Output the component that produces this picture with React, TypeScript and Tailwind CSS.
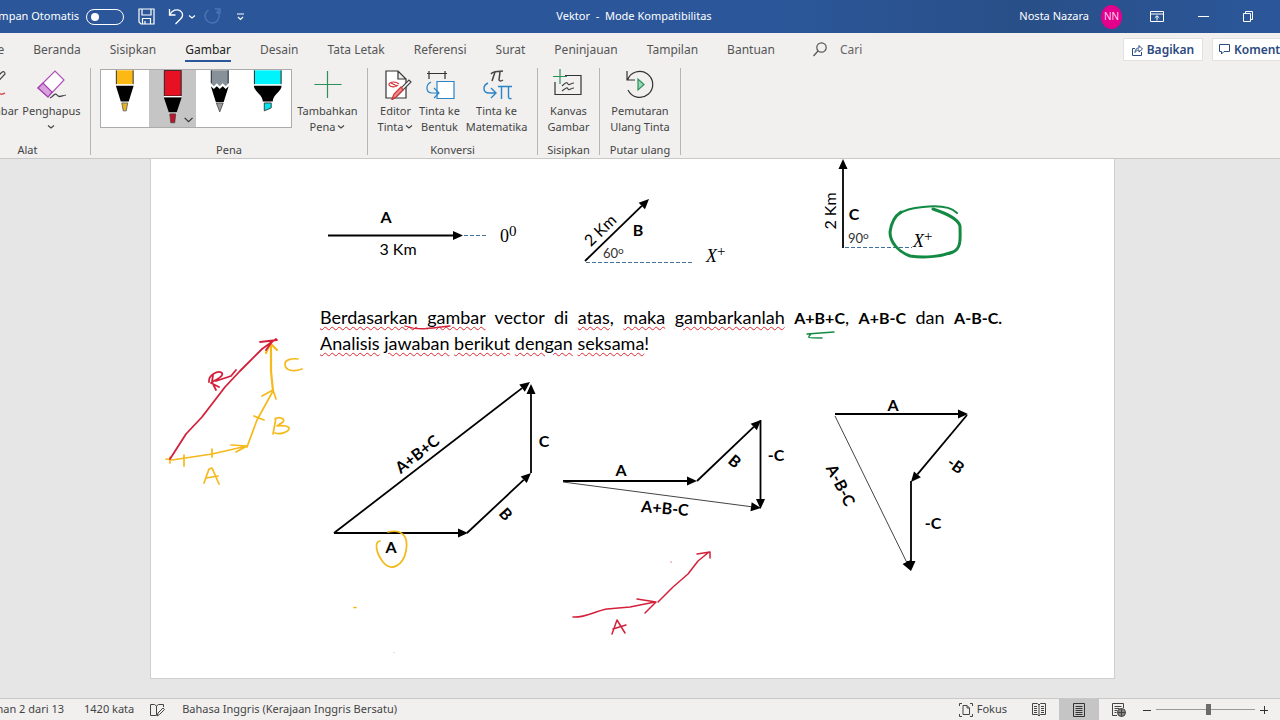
import React from 'react';

const INK_RED = '#d3203b';
const INK_GOLD = '#f6b91c';
const INK_GREEN = '#138a43';

const tabs = ['File', 'Beranda', 'Sisipkan', 'Gambar', 'Desain', 'Tata Letak', 'Referensi', 'Surat', 'Peninjauan', 'Tampilan', 'Bantuan'];

function Chevron({ className = '' }: { className?: string }) {
  return (
    <svg viewBox="0 0 8 6" className={`inline-block h-[6px] w-2 ${className}`} fill="none" stroke="currentColor" strokeWidth="1.1">
      <path d="M1 1.5 4 4l3-2.5" />
    </svg>
  );
}

/* ---------- Title bar ---------- */

function TitleBar() {
  return (
    <header className="grid h-[33px] grid-cols-[1fr_auto_1fr] items-center bg-linear-to-r from-[#2b579a] from-60% via-[#294f88] via-80% to-[#2b579a] pr-[12px] text-[11px] text-white">
      <div className="flex items-center">
        <div className="flex w-[79px] justify-end overflow-hidden whitespace-nowrap">
          <label htmlFor="autosave">Simpan Otomatis</label>
        </div>
        <input
          id="autosave"
          type="checkbox"
          className="ml-[7px] h-4 w-[38px] appearance-none rounded-full border border-white before:ml-1 before:mt-[3px] before:block before:h-2 before:w-2 before:rounded-full before:bg-white before:content-['']"
        />
        <button aria-label="Simpan" className="ml-[14px]">
          <svg viewBox="0 0 17 17" className="h-[17px] w-[17px]" fill="none" stroke="white" strokeWidth="1.2">
            <path d="M1 1h15v15H3l-2-2zM4 1v6h9V1M4.500 16v-5.500h8V16M7 16v-3" />
          </svg>
        </button>
        <button aria-label="Urungkan" className="ml-[13px] flex items-center gap-1">
          <svg viewBox="0 0 16 17" className="h-[17px] w-4" fill="none" stroke="white" strokeWidth="1.3">
            <path d="M1.500 1v6h6M1.500 7C4 2 9 .5 12.500 3c3.500 3 2 6 0 8l-5 5" />
          </svg>
          <Chevron />
        </button>
        <button aria-label="Ulangi" className="ml-2">
          <svg viewBox="0 0 17 17" className="h-[17px] w-[17px]" fill="none" stroke="#4a75b3" strokeWidth="1.4">
            <path d="M11 1h5v5M15 2.500 12 5M4.500 2a7 7 0 1 0 9 1.500" />
          </svg>
        </button>
        <button aria-label="Kustomisasi" className="ml-[15px]">
          <svg viewBox="0 0 9 8" className="h-2 w-[9px]" fill="none" stroke="white" strokeWidth="1.2">
            <path d="M1 1h7M2 4l2.500 2.500L7 4" />
          </svg>
        </button>
      </div>
      <div className="whitespace-pre">Vektor  -  Mode Kompatibilitas</div>
      <div className="flex items-center justify-end pr-[15px]">
        <span>Nosta Nazara</span>
        <span className="ml-3 flex h-6 w-[21px] items-center justify-center rounded-[50%] bg-[#e3008c] text-[10px] text-[#ffd3ee]">NN</span>
        <button aria-label="Opsi pita" className="ml-7">
          <svg viewBox="0 0 14 11" className="h-[11px] w-[14px]" fill="none" stroke="white">
            <path d="M.5.5h13v10H.5zM.5 3h13M7 9.500V5M4.800 6.800 7 4.700l2.200 2.100" />
          </svg>
        </button>
        <button aria-label="Minimalkan" className="ml-[34px]">
          <svg viewBox="0 0 11 11" className="h-[11px] w-[11px]" stroke="white">
            <path d="M0 5.500h11" />
          </svg>
        </button>
        <button aria-label="Pulihkan" className="ml-[34px]">
          <svg viewBox="0 0 10 11" className="h-[11px] w-[10px]" fill="none" stroke="white">
            <path d="M.5 2.500h7v8h-7zM2.500 2.500v-2h7v8h-2" />
          </svg>
        </button>
      </div>
    </header>
  );
}

/* ---------- Ribbon ---------- */

function TabRow() {
  return (
    <nav className="flex h-[33px] items-center text-xs text-[#555]">
      <div className="-ml-[15px] flex gap-[29px]">
        {tabs.map((tab) => (
          <button
            key={tab}
            className={
              tab === 'Gambar'
                ? 'border-b-2 border-[#2b579a] pt-[2px] leading-[20px] text-[#222]'
                : 'border-b-2 border-transparent pt-[2px] leading-[20px]'
            }
          >
            {tab}
          </button>
        ))}
      </div>
      <label htmlFor="search" className="ml-[38px]">
        <svg viewBox="0 0 14 15" className="h-[15px] w-[14px]" fill="none" stroke="#555" strokeWidth="1.200">
          <circle cx="8.500" cy="5.500" r="4.700" />
          <path d="M5 9 .5 14" />
        </svg>
      </label>
      <input id="search" placeholder="Cari" className="ml-[13px] w-32 bg-transparent outline-none placeholder:text-[#666]" />
      <div className="-mr-[17px] ml-auto flex gap-[9px] font-semibold text-[#2b4a80]">
        <button className="flex h-[23px] w-20 items-center justify-center gap-1 border border-[#e1e1e1] bg-white">
          <svg viewBox="0 0 11 12" className="h-3 w-[11px]" fill="none" stroke="currentColor">
            <path d="M3 4.500H.5v7h9V8M3 8.500c0-3 1.500-4.500 4-4.500V1.500L10.500 5 7 8V6C5 6 4 7 3 8.500z" />
          </svg>
          Bagikan
        </button>
        <button className="flex h-[23px] w-[85px] items-center gap-1 border border-[#e1e1e1] bg-white pl-[6px]">
          <svg viewBox="0 0 11 11" className="h-[11px] w-[11px] shrink-0" fill="none" stroke="currentColor">
            <path d="M.5.500h10v7H5L2.500 10V7.500h-2z" />
          </svg>
          Komentar
        </button>
      </div>
    </nav>
  );
}

function Group({ label, className, children }: { label: string; className: string; children: React.ReactNode }) {
  return (
    <section className={`flex h-[87px] shrink-0 flex-col justify-between border-r border-[#b5b5b5] ${className}`}>
      <div className="flex justify-center">{children}</div>
      <div className="text-center leading-[10px]">{label}</div>
    </section>
  );
}

function Tool({ icon, lines, menu, className = '' }: { icon: React.ReactNode; lines: string[]; menu?: boolean; className?: string }) {
  return (
    <button className={`flex flex-col items-center whitespace-nowrap leading-[16px] ${className}`}>
      <svg viewBox="0 0 32 32" className="mb-[3px] h-8 w-8" fill="none" strokeWidth="1.200">
        {icon}
      </svg>
      {lines.map((line, i) => (
        <span key={i} className="flex h-4 items-center gap-[2px]">
          {line}
          {menu && i === lines.length - 1 && <Chevron />}
        </span>
      ))}
    </button>
  );
}

const pens = [
  {
    name: 'Pena kuning',
    art: (
      <>
        <path d="M15.500 0v14h17V0z" fill="#fdb913" />
        <path d="M15.500 0v14M32.500 0v14" stroke="#333" />
        <path d="M15 15.500h18l-5 16h-8z" fill="#000" />
        <path d="M21 33h6l-1.500 8h-3z" fill="#e6b422" stroke="#555" strokeWidth=".8" />
      </>
    ),
  },
  {
    name: 'Pena merah',
    selected: true,
    art: (
      <>
        <path d="M15.500 0v26h17V0z" fill="#e81123" stroke="#222" />
        <path d="M15 26.500h18" stroke="#fff" />
        <path d="M15 27.500h18l-5 15h-8z" fill="#000" />
        <path d="M20 43.500h8" stroke="#fff" />
        <path d="M21 44h6l-1 9h-4z" fill="#c4122b" stroke="#444" strokeWidth=".8" />
        <path d="m36 48 4 4 4-4" fill="none" stroke="#333" strokeWidth="1.200" />
      </>
    ),
  },
  {
    name: 'Pensil',
    art: (
      <>
        <path d="M15 0h18v13l-3 3-3-3-3 3-3-3-3 3-3-3z" fill="#879199" />
        <path d="m15 16 3 3 3-3 3 3 3-3 3 3 3-3-5 16h-8z" fill="#000" />
        <path d="M15.500 0v13M32.500 0v13" stroke="#333" />
        <path d="M20.500 33h7L24 42z" fill="#999" stroke="#444" strokeWidth=".8" />
      </>
    ),
  },
  {
    name: 'Penyorot',
    art: (
      <>
        <path d="M10.500 0v14h27V0z" fill="#00f4fb" />
        <path d="M10.500 0v14M37.500 0v14" stroke="#222" />
        <path d="M10 15.500h28c0 6-9 9-9 16H19c0-7-9-10-9-16z" fill="#000" />
        <path d="M20.500 33h7v5l-7 3z" fill="#00e5ee" stroke="#333" strokeWidth=".9" />
      </>
    ),
  },
];

function Ribbon() {
  return (
    <div className="flex h-[93px] border-b border-[#c8c8c8] pt-[2px] text-[11px] text-[#444]">
      <Group label="Alat" className="-ml-[35px] w-[126px]">
        <Tool
          className="ml-3"
          lines={['Gambar']}
          icon={
            <>
              <path d="m7 20 13-15q4-3 4 1L11 20l-4 2z" stroke="#444" />
              <path d="M14 26c4-4 4 3 10-1" stroke="#d13438" />
            </>
          }
        />
        <Tool
          className="ml-1 mr-[10px]"
          lines={['Penghapus', '']}
          menu
          icon={
            <>
              <path d="M3 20 20 3l9 9-16 17z" fill="#fff" stroke="#b04fb8" />
              <path d="m3 20 5-5 9 9-4 5z" fill="#d9a0e0" stroke="#a33fae" />
              <path d="M15 30c3-1 5-6 7-3s4 1 9 0" stroke="#444" />
            </>
          }
        />
      </Group>

      <Group label="Pena" className="w-[277px]">
        <div className="mt-px flex h-[59px] w-[192px] shrink-0 border border-[#ababab] bg-white">
          {pens.map((pen) => (
            <button key={pen.name} aria-label={pen.name} className={pen.selected ? 'flex-1 bg-[#c5c5c5]' : 'flex-1'}>
              <svg viewBox="0 0 48 57" className="h-[57px] w-full">
                {pen.art}
              </svg>
            </button>
          ))}
        </div>
        <Tool className="ml-[5px]" lines={['Tambahkan', 'Pena']} menu icon={<path d="M15.500 3v27M2.500 16.500h27" stroke="#2f8f5b" />} />
      </Group>

      <Group label="Konversi" className="w-[170px]">
        <Tool
          className="w-11"
          lines={['Editor', 'Tinta']}
          menu
          icon={
            <>
              <path d="M6 3h12l8 8v19H6zM18 3v8h8" fill="#fff" stroke="#333" />
              <path d="M19 16c-5-4-11-1-10 1s7 3 9 0M11 15l6 3" stroke="#d13438" />
              <path d="m13 31 2-5 14-14 2 2-14 14z" fill="#fff" stroke="#444" />
              <path d="m12 31 2-5 7-7 2 3-7 7z" fill="#ef8a8a" stroke="#d13438" />
            </>
          }
        />
        <Tool
          className="w-11"
          lines={['Tinta ke', 'Bentuk']}
          icon={
            <>
              <path d="M3 5.500h20M5 3v8M21 3v8" stroke="#333" />
              <path d="M13 13.500h17v17H13z" fill="#fff" stroke="#2a84c6" />
              <path d="M7 14c-6 3-5 11 1 11h6M10 20l5 5-5 5" stroke="#2a84c6" />
            </>
          }
        />
        <Tool
          className="w-[70px]"
          lines={['Tinta ke', 'Matematika']}
          icon={
            <>
              <path d="M10 6c2-3 4-2 12-3M14 4l-3 9M19 4l-1 8q1 2 4 0" stroke="#444" strokeWidth="1.500" />
              <path d="M7 15c-6 3-5 10 1 10h6M10 20l5 5-5 5M17 18.500h14M20.500 19v12M27.500 19v10q0 2 3 1.500" stroke="#2a84c6" strokeWidth="1.400" />
            </>
          }
        />
      </Group>

      <Group label="Sisipkan" className="w-[62px]">
        <Tool
          lines={['Kanvas', 'Gambar']}
          icon={
            <>
              <path d="M13 7.500h16v19H3V14" stroke="#333" />
              <path d="M8 1v15M1 8.500h14" stroke="#2f8f5b" />
              <path d="M10 18c4-4 5-4 6-2s3-1 6-1M10 23c4-3 5-4 6-2s3-1 6-1" stroke="#444" />
            </>
          }
        />
      </Group>

      <Group label="Putar ulang" className="w-[81px]">
        <Tool
          lines={['Pemutaran', 'Ulang Tinta']}
          icon={
            <>
              <path d="M3 3v9h8M3.500 12A13 13 0 1 1 4 22" stroke="#333" />
              <path d="M14 11v11l6-5.500z" fill="#9ad8b4" stroke="#2f8f5b" />
            </>
          }
        />
      </Group>
    </div>
  );
}

/* ---------- Document ---------- */

type Point = [number, number];

// Straight line that ends in a filled triangular head
function Vector({ from, to, thin }: { from: Point; to: Point; thin?: boolean }) {
  const angle = Math.atan2(to[1] - from[1], to[0] - from[0]);
  const base: Point = [to[0] - 10 * Math.cos(angle), to[1] - 10 * Math.sin(angle)];
  const nx = 4.5 * Math.sin(angle);
  const ny = 4.5 * Math.cos(angle);
  return (
    <g>
      <line x1={from[0]} y1={from[1]} x2={base[0]} y2={base[1]} stroke={thin ? '#444' : '#000'} strokeWidth={thin ? 1 : 1.8} />
      <polygon points={`${to[0]},${to[1]} ${base[0] - nx},${base[1] + ny} ${base[0] + nx},${base[1] - ny}`} fill="#000" />
    </g>
  );
}

function Label({ at, turn = 0, plain, children }: { at: Point; turn?: number; plain?: boolean; children: React.ReactNode }) {
  return (
    <text
      x={at[0]}
      y={at[1]}
      dy="6"
      textAnchor="middle"
      fontSize="16"
      fontWeight={plain ? 400 : 700}
      transform={`rotate(${turn} ${at[0]} ${at[1]})`}
    >
      {children}
    </text>
  );
}

function Degrees({ at, value }: { at: Point; value: string }) {
  return (
    <text x={at[0]} y={at[1]} fontSize="13" fill="#333">
      {value}
      <tspan dy="-4" fontSize="10">o</tspan>
    </text>
  );
}

function Axis({ at, base, sup, italic }: { at: Point; base: string; sup: string; italic?: boolean }) {
  return (
    <text x={at[0]} y={at[1]} fontSize="18" fontFamily="Liberation Serif, serif">
      <tspan fontStyle={italic ? 'italic' : 'normal'}>{base}</tspan>
      <tspan dy="-6" fontSize="15">{sup}</tspan>
    </text>
  );
}

function Dashes({ x1, x2, y }: { x1: number; x2: number; y: number }) {
  return <path d={`M${x1} ${y}H${x2}`} stroke="#41719c" strokeDasharray="4 2" />;
}

function Wavy({ children }: { children: React.ReactNode }) {
  return <span className="underline decoration-[#e0282e] decoration-wavy decoration-1 underline-offset-2">{children}</span>;
}

function GivenVectors() {
  return (
    <div className="grid grid-cols-[240px_260px_180px]">
      <svg viewBox="320 159 240 145" className="h-[145px] w-full">
        <Vector from={[328, 235.5]} to={[463, 235.5]} />
        <Dashes x1={464} x2={486} y={235.5} />
        <Label at={[386, 217]}>A</Label>
        <Label at={[398, 249]} plain>3 Km</Label>
        <Axis at={[500, 242]} base="0" sup="0" />
      </svg>
      <svg viewBox="560 159 260 145" className="h-[145px] w-full">
        <Vector from={[585, 261]} to={[649, 199]} />
        <Dashes x1={586} x2={693} y={262.5} />
        <Label at={[600, 230]} turn={-44} plain>2 Km</Label>
        <Label at={[638, 230]}>B</Label>
        <Degrees at={[603, 258]} value="60" />
        <Axis at={[706, 262]} base="X" sup="+" italic />
      </svg>
      <svg viewBox="820 159 180 145" className="h-[145px] w-full">
        <Vector from={[843, 248]} to={[843, 159]} />
        <Dashes x1={845} x2={912} y={247.5} />
        <Label at={[830, 211]} turn={-90} plain>2 Km</Label>
        <Label at={[854, 214]}>C</Label>
        <Degrees at={[848, 243]} value="90" />
        <Axis at={[913, 247]} base="X" sup="+" italic />
      </svg>
    </div>
  );
}

function Answers() {
  return (
    <div className="grid grid-cols-[240px_260px_180px]">
      <svg viewBox="320 356 240 240" className="h-60 w-full">
        <Vector from={[334, 533]} to={[468, 533]} />
        <Vector from={[467, 533]} to={[531, 473]} />
        <Vector from={[531, 473]} to={[531, 384]} />
        <Vector from={[334, 533]} to={[530, 382]} />
        <Label at={[417, 454]} turn={-38}>A+B+C</Label>
        <Label at={[544, 441]}>C</Label>
        <Label at={[506, 514]} turn={48}>B</Label>
        <Label at={[391, 547]}>A</Label>
      </svg>
      <svg viewBox="560 356 260 240" className="h-60 w-full">
        <Vector from={[563, 481]} to={[697, 481]} />
        <Vector from={[697, 481]} to={[761, 420]} />
        <Vector from={[760.5, 420]} to={[760.5, 509]} />
        <Vector from={[563, 482]} to={[761, 508]} thin />
        <Label at={[621, 470]}>A</Label>
        <Label at={[735, 461]} turn={40}>B</Label>
        <Label at={[776, 455]}>-C</Label>
        <Label at={[665, 508]} turn={5}>A+B-C</Label>
      </svg>
      <svg viewBox="820 356 180 240" className="h-60 w-full overflow-visible">
        <Vector from={[835, 414]} to={[968, 414]} />
        <Vector from={[967, 415]} to={[911, 482]} />
        <Vector from={[911, 481]} to={[911, 571]} />
        <Vector from={[835, 416]} to={[911, 571]} thin />
        <Label at={[893, 405]}>A</Label>
        <Label at={[956, 465]} turn={36}>-B</Label>
        <Label at={[933, 523]}>-C</Label>
        <Label at={[841, 485]} turn={63}>A-B-C</Label>
      </svg>
    </div>
  );
}

// Freehand pen strokes lying over the page
function Ink() {
  return (
    <svg viewBox="150 159 965 520" className="pointer-events-none absolute -left-px top-0 h-[520px] w-[965px]" fill="none" strokeLinecap="round" strokeLinejoin="round">
      <g stroke={INK_GOLD} strokeWidth="1.700">
        <path d="M166 459l6 1 40-6 35-8M231 445l16 1-11 6M170 457v6M184 455v11M212 449v8" />
        <path d="M247 447l10-27 16-29M254 416l10 4M262 396l11-6 3 9" />
        <path d="M273 391l-2-20v-26M266 353l4-10 7 7" strokeWidth="2.200" />
        <path d="M204 483l5-14 3-1 7 16M206 478l12-2" />
        <path d="M276 418l-3 16M275 419c4-3 11 0 8 3l-6 4c6-1 13 0 12 3s-9 6-14 4" />
        <path d="M298 359c-7-1-13 1-13 5 0 7 9 8 17 5" />
        <path d="M380 541c-6 1-4 12 3 21 8 10 20 4 23-11 3-16-5-22-18-19" />
        <path d="M354 607.500h2" />
      </g>
      <g stroke={INK_RED} strokeWidth="1.800">
        <path d="M170 459l16-25 16-17 23-30 15-16 22-22 14-10M260 342l17-2M272 342l-6 8" />
        <path d="M213 375l-1 7 4 8M209 382c-1-7 9-12 13-9 2 3-6 7-10 9M211 383l8 4M216 381l15-5 5-6" />
        <path d="M405 326c14 5 25 2 45 0" strokeWidth="1.300" />
        <path d="M573 617c12 1 22-6 34-8l23-2 25-5M637 599l19 3-11 11M658 602l15-15 15-13 10-13 11-9M697 554l13-2v6" strokeWidth="1.500" />
        <path d="M612 634l5-14 8 13M613 629l13-4" strokeWidth="1.500" />
        <path d="M671 562h.1" strokeWidth="1.200" />
      </g>
      <g stroke={INK_GREEN}>
        <path d="M957 213c-6-6-16-8-34-6-11 1-19 3-24 7" strokeWidth="2" />
        <path d="M901 212c-6 4-10 12-11 20 0 11 9 20 20 24 13 2 30 1 43-4 9-4 7-15 7-26-2-8-15-13-27-17" strokeWidth="3" />
        <path d="M807 334l27-2M811 334c-4 4-4 4 11 4" strokeWidth="1.300" />
      </g>
      <path d="M394 652.500h.1" stroke="#bbb" strokeWidth="1.200" />
    </svg>
  );
}

function DocumentPage() {
  return (
    <main className="flex flex-1 justify-center bg-[#e6e6e6] pb-[19px] pr-[15px]">
      <article className="relative w-full max-w-[965px] border-x border-b border-[#cfcfcf] bg-white pl-[169px] pr-[112px] font-[Lato,Carlito,sans-serif] text-black">
        <GivenVectors />
        <p className="text-lg leading-[26px]">
          <span className="block whitespace-nowrap [text-align-last:justify]">
            <Wavy>Berdasarkan</Wavy> <Wavy>gambar</Wavy> vector di <Wavy>atas</Wavy>, <Wavy>maka</Wavy> <Wavy>gambarkanlah</Wavy>{' '}
            <b className="text-base">A+B+C</b>, <b className="text-base">A+B-C</b> dan <b className="text-base">A-B-C.</b>
          </span>
          <Wavy>Analisis</Wavy> <Wavy>jawaban</Wavy> <Wavy>berikut</Wavy> <Wavy>dengan</Wavy> <Wavy>seksama</Wavy>!
        </p>
        <Answers />
        <Ink />
      </article>
    </main>
  );
}

/* ---------- Status bar ---------- */

function StatusBar() {
  return (
    <footer className="flex h-[22px] items-center border-t border-[#c8c8c8] bg-[#f1f0ef] text-[11px] text-[#444]">
      <div className="flex w-16 justify-end overflow-hidden whitespace-nowrap">Halaman 2 dari 13</div>
      <span className="ml-5">1420 kata</span>
      <button aria-label="Pemeriksaan" className="ml-4">
        <svg viewBox="0 0 15 14" className="h-[14px] w-[15px]" fill="none" stroke="#444">
          <path d="M6.500 12.500h-6v-11h4l2 1.500v9M6.500 3l2-1.500h5V4M7 13l1-3 5-5 1.500 1.500-5 5z" />
        </svg>
      </button>
      <span className="ml-[17px]">Bahasa Inggris (Kerajaan Inggris Bersatu)</span>

      <div className="ml-auto flex h-full items-center pr-3">
        <button className="mr-3 flex items-center gap-1">
          <svg viewBox="0 0 14 14" className="h-[14px] w-[14px]" fill="none" stroke="#444">
            <path d="M3 .5H.5V3M11 .5h2.500V3M3 13.500H.5V11M11 13.500h2.500V11M4 2.500h4l2.500 2.500v6.500H4zM8 2.500V5h2.500" />
          </svg>
          Fokus
        </button>
        <button aria-label="Mode baca" className="flex h-full w-10 items-center justify-center">
          <svg viewBox="0 0 14 13" className="h-[13px] w-[14px]" fill="none" stroke="#444">
            <path d="M7 2 5.500.5h-5v11h5L7 13l1.500-1.500h5V.5h-5zM7 2v10M2 3.500h3M2 5.500h3M2 7.500h3M2 9.500h3M9 3.500h3M9 5.500h3M9 7.500h3M9 9.500h3" />
          </svg>
        </button>
        <button aria-label="Tata letak cetak" className="flex h-full w-10 items-center justify-center bg-[#c5c5c5]">
          <svg viewBox="0 0 12 14" className="h-[14px] w-3" fill="none" stroke="#333">
            <path d="M.5.5h11v13H.5zM2.500 3.500h7M2.500 5.500h7M2.500 7.500h7M2.500 9.500h7M2.500 11.500h7" />
          </svg>
        </button>
        <button aria-label="Tata letak web" className="flex h-full w-10 items-center justify-center">
          <svg viewBox="0 0 14 14" className="h-[14px] w-[14px]" fill="none" stroke="#444">
            <path d="M5 12.500H.5V.5h11V5M2.500 3.500h7M2.500 5.500h5M2.500 7.500h3M2.500 9.500h2" />
            <circle cx="9.500" cy="9.500" r="4" fill="#888" />
            <path d="M5.500 9.500h8M9.500 5.500v8" />
          </svg>
        </button>
        <button aria-label="Perkecil" className="ml-1 mr-[5px] w-2">
          <svg viewBox="0 0 8 8" className="h-2 w-2" stroke="#333">
            <path d="M0 4.500h8" />
          </svg>
        </button>
        <input
          type="range"
          aria-label="Zoom"
          defaultValue={53}
          className="h-3 w-[99px] appearance-none bg-transparent [&::-webkit-slider-runnable-track]:h-px [&::-webkit-slider-runnable-track]:bg-[#999] [&::-webkit-slider-thumb]:-mt-[5px] [&::-webkit-slider-thumb]:h-[11px] [&::-webkit-slider-thumb]:w-[5px] [&::-webkit-slider-thumb]:appearance-none [&::-webkit-slider-thumb]:bg-[#6b6b6b]"
        />
        <button aria-label="Perbesar" className="ml-[5px] w-2">
          <svg viewBox="0 0 8 8" className="h-2 w-2" stroke="#333">
            <path d="M0 4.500h8M4.500 0v8" />
          </svg>
        </button>
      </div>
    </footer>
  );
}

export default function App() {
  return (
    <div className="flex min-h-screen flex-col overflow-hidden bg-[#f1f0ef] font-['Noto_Sans',sans-serif]">
      <TitleBar />
      <TabRow />
      <Ribbon />
      <DocumentPage />
      <StatusBar />
    </div>
  );
}
